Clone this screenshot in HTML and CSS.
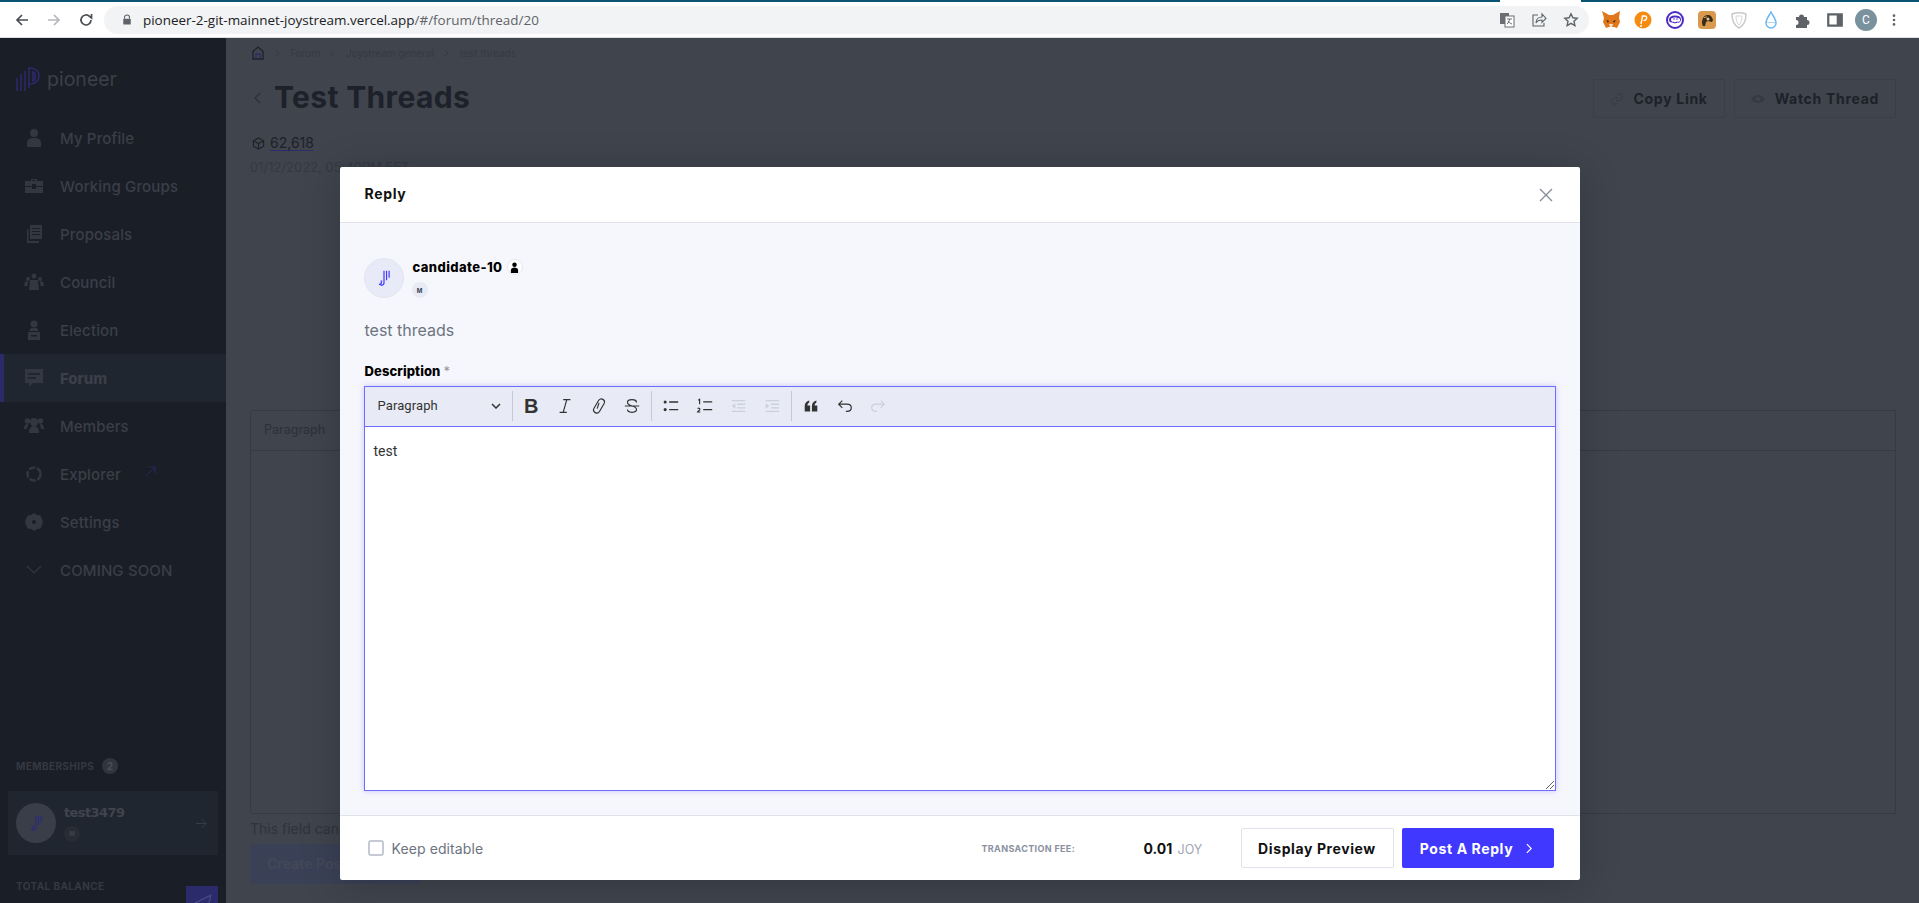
FILE: index.html
```html
<!DOCTYPE html>
<html lang="en">
<head>
<meta charset="utf-8">
<title>Pioneer</title>
<link rel="stylesheet" href="styles.css">
</head>
<body>
<header class="chrome">
  <div class="strip"><span class="strip-a"></span><span class="strip-b"></span></div>
  <div class="bar">
    <svg class="nav-btn" viewBox="0 0 16 16"><path d="M14 8H3M8 3 3 8l5 5" fill="none" stroke="#4a4d52" stroke-width="1.7"/></svg>
    <svg class="nav-btn" viewBox="0 0 16 16"><path d="M2 8h11M8 3l5 5-5 5" fill="none" stroke="#b4b6b9" stroke-width="1.7"/></svg>
    <svg class="nav-btn" viewBox="0 0 16 16"><path d="M13 8a5 5 0 1 1-1.5-3.6L13.5 6V2" fill="none" stroke="#4a4d52" stroke-width="1.7"/></svg>
    <div class="omnibox">
      <svg class="lock" viewBox="0 0 12 14"><path d="M3 6V4.500a3 3 0 0 1 6 0V6" fill="none" stroke="#5f6368" stroke-width="1.300"/><rect x="1.500" y="6" width="9" height="7" rx="1" fill="#5f6368"/></svg>
      <span class="url">pioneer-2-git-mainnet-joystream.vercel.app<span class="url-path">/#/forum/thread/20</span></span>
      <svg class="omni-icon" viewBox="0 0 16 16"><rect x="1" y="1" width="9" height="11" fill="#6b6e72"/><rect x="6" y="4" width="9" height="11" fill="#fff" stroke="#6b6e72"/><path d="M8 7h5M10.500 7c0 2-1 4-2.500 5M9 9c1 1.500 2.500 2.500 4 3" stroke="#6b6e72" fill="none"/></svg>
      <svg class="omni-icon" viewBox="0 0 16 16"><path d="M7 3H2v11h11v-3" fill="none" stroke="#5f6368" stroke-width="1.100"/><path d="M5 11c0-4 3-6 6-6V2l4 4.500-4 4V8c-3 0-5 1-6 3z" fill="none" stroke="#5f6368" stroke-width="1.100"/></svg>
      <svg class="omni-icon" viewBox="0 0 16 16"><path d="m8 1.800 1.900 4 4.300.5-3.200 3 .9 4.300L8 11.400l-3.900 2.200.9-4.300-3.200-3 4.300-.5z" fill="none" stroke="#5f6368" stroke-width="1.400"/></svg>
    </div>
    <div class="extensions">
      <svg class="ext" viewBox="0 0 18 18"><path d="M0 0l7 4h4l7-4-1 7 1 4-3 6-3-1H7l-3 1-3-6 1-4z" fill="#e2761b"/><path d="M4 9l3 1-1 2zM14 9l-3 1 1 2z" fill="#3b2a1a"/><path d="M7 13h4l-1 3H8z" fill="#f5e0c8"/></svg>
      <svg class="ext" viewBox="0 0 18 18"><circle cx="9" cy="9" r="8.500" fill="#f68b10"/><path d="M7 13 8.500 5h2c2 0 2.500 1.500 2 2.800-.4 1.200-1.500 1.700-3 1.700" fill="none" stroke="#fff" stroke-width="1.400"/><circle cx="7" cy="15" r="1" fill="#fff"/></svg>
      <svg class="ext" viewBox="0 0 18 18"><circle cx="9" cy="9" r="8" fill="#fff" stroke="#4c2bc4" stroke-width="2"/><path d="M3 9c0-3 2-4.500 6-4.500s6 1.500 6 4-2 3.500-3.500 3c-1 1-4 1-5 0C5 11.500 3 11 3 9z" fill="#4c2bc4"/><path d="M5 8c1-2 7-2 9 0v2c-1 1-2 1-3 .5-1 1-3 1-4 0-1 .5-2 0-2-2.500z" fill="#fff"/><circle cx="8" cy="8" r=".8" fill="#4c2bc4"/><circle cx="11" cy="8" r=".8" fill="#4c2bc4"/></svg>
      <svg class="ext" viewBox="0 0 18 18"><rect width="18" height="18" rx="4" fill="#d99a4e"/><path d="M5 15c-2-3-1-11 5-11 3 0 4 2 5 5l-1 2-4-1-2 1-1 4z" fill="#3a2a18"/><circle cx="10" cy="8" r="1.500" fill="#e9c48e"/><path d="M6 7c1-1 2-1 3-1" stroke="#e9c48e" fill="none"/></svg>
      <svg class="ext" viewBox="0 0 18 18"><path d="M2 3c4-1.500 10-1.500 14 0 0 6-1 11-7 14C3 14 2 9 2 3z" fill="none" stroke="#c8c9cb" stroke-width="1.500"/><path d="M6 5h6c0 4-1 7-3 9-2-2-3-5-3-9z" fill="none" stroke="#d6d7d9"/></svg>
      <svg class="ext" viewBox="0 0 18 18"><path d="M9 1C7 5 4 8 4 12a5 5 0 0 0 10 0C14 8 11 5 9 1z" fill="none" stroke="#6cb8f2" stroke-width="1.500"/><path d="M5 11.500h8" stroke="#a9d7f7"/></svg>
      <svg class="ext" viewBox="0 0 18 18"><path d="M2 6h3a2.500 2.500 0 1 1 5 0h3v3a2.500 2.500 0 1 1 0 5v3H2v-3a2.500 2.500 0 1 0 0-5z" fill="#5f6368"/></svg>
      <svg class="ext" viewBox="0 0 16 16"><rect x="1" y="2" width="14" height="12" fill="#5f6368"/><rect x="3" y="4" width="6.500" height="8" fill="#fff"/></svg>
      <span class="profile">C</span>
      <svg class="dots" viewBox="0 0 4 16"><circle cx="2" cy="3" r="1.500"/><circle cx="2" cy="8" r="1.500"/><circle cx="2" cy="13" r="1.500"/></svg>
    </div>
  </div>
</header>

<div class="app">
  <aside class="sidebar">
    <div class="logo">
      <svg class="logo-mark" viewBox="0 0 26 26"><g fill="none" stroke="#2b2a6a" stroke-width="1.600"><path d="M2 25V12M6 25V8M10 25V5"/><path d="M14 22V2c6 0 10 3 10 8s-4 8-9 8"/><path d="M18 15V6c3 0 3 9 0 9z"/></g></svg>
      <span class="logo-text">pioneer</span>
    </div>
    <nav class="nav">
      <a class="nav-item"><svg class="nav-icon" viewBox="0 0 20 20"><circle cx="10" cy="5" r="4"/><path d="M3 19v-4c0-4 3-5 7-5s7 1 7 5v4z"/></svg>My Profile</a>
      <a class="nav-item"><svg class="nav-icon" viewBox="0 0 20 20"><path d="M1 5h18v5H12V8H8v2H1zM7 5V3h6v2h-1.500V4h-3v1zM1 11h7v2h4v-2h7v6H1z"/></svg>Working Groups</a>
      <a class="nav-item"><svg class="nav-icon" viewBox="0 0 20 20"><path d="M6 1h12v14H6zm2 3v1h8V4zm0 3v1h8V7zm0 3v1h8v-1z" fill-rule="evenodd"/><path d="M3 5h1.500v12H15v2H3z"/></svg>Proposals</a>
      <a class="nav-item"><svg class="nav-icon" viewBox="0 0 20 20"><circle cx="10" cy="4" r="2.500"/><circle cx="4" cy="7" r="2"/><circle cx="16" cy="7" r="2"/><path d="M6 8h8l1 10H5zM0 14l1-4.500h3L3.500 14zM20 14l-1-4.500h-3l.5 4.500z"/></svg>Council</a>
      <a class="nav-item"><svg class="nav-icon" viewBox="0 0 20 20"><circle cx="10" cy="4" r="3.500"/><path d="M7 8h6l2 3H5zM4 12h12v8H4zm3 3v1.500h6V15z" fill-rule="evenodd"/></svg>Election</a>
      <a class="nav-item nav-active"><svg class="nav-icon" viewBox="0 0 20 20"><path d="M1 1h18v14H9l-4 4v-4H1zm3 4v2h12V5zm0 4v2h8V9z" fill-rule="evenodd"/></svg>Forum</a>
      <a class="nav-item"><svg class="nav-icon" viewBox="0 0 20 20"><circle cx="10" cy="6" r="4"/><circle cx="3.500" cy="5" r="2.800"/><circle cx="16.500" cy="5" r="2.800"/><path d="M5 17c0-5 2-7 5-7s5 2 5 7zM0 13c0-3 1-5 3.500-5l1 1c-1 1-1.500 2.500-1.500 4zM20 13c0-3-1-5-3.500-5l-1 1c1 1 1.500 2.500 1.500 4z"/></svg>Members</a>
      <a class="nav-item"><svg class="nav-icon" viewBox="0 0 20 20"><circle cx="10" cy="10" r="6.500" fill="none" stroke="currentColor" stroke-width="2.500" stroke-dasharray="6.500 1.700"/></svg>Explorer<svg class="external" viewBox="0 0 12 12"><path d="M1 11 11 1M4 1h7v7" fill="none" stroke="#2b2a6a"/></svg></a>
      <a class="nav-item"><svg class="nav-icon" viewBox="0 0 20 20"><path d="M10 1l3 2 3.500.5L18 7l1 3-1 3-1.500 3.500L13 17l-3 2-3-2-3.500-.5L2 13l-1-3 1-3 1.500-3.500L7 3zm0 7a2 2 0 1 0 0 4 2 2 0 0 0 0-4z" fill-rule="evenodd"/></svg>Settings</a>
      <a class="nav-item"><svg class="nav-icon" viewBox="0 0 20 20"><path d="M3 6l7 7 7-7" fill="none" stroke="currentColor" stroke-width="1.200"/></svg>COMING SOON</a>
    </nav>
    <div class="memberships">
      <div class="side-label">MEMBERSHIPS <span class="count">2</span></div>
      <div class="member-card">
        <span class="side-avatar"><svg class="mark" viewBox="0 0 14 20"><path d="M1 17c2 0 3-1 3-3M3 13h2M7 1v14c0 2-2 3-4 3M10 1v11M13 1v8" fill="none" stroke="#2b2a7a" stroke-width="1.400"/></svg></span>
        <div class="side-member">
          <span class="side-name">test3479</span>
          <span class="side-badge">M</span>
        </div>
        <svg class="side-arrow" viewBox="0 0 12 12"><path d="M0 6h11M6 1l5 5-5 5" fill="none" stroke="#3a3f49"/></svg>
      </div>
      <div class="balance">
        <span class="side-label">TOTAL BALANCE</span>
        <span class="transfer"><svg viewBox="0 0 16 16"><path d="M1 8 15 1l-3 13-4-4z" fill="none" stroke="#4a4a8a"/></svg></span>
      </div>
    </div>
  </aside>

  <main class="main">
    <div class="crumbs">
      <svg class="home" viewBox="0 0 12 14"><path d="M1 5.500 6 1l5 4.500V13H1z" fill="none" stroke="#1d2129" stroke-width="1.300"/><path d="M4 13V8h4v5" fill="none" stroke="#2b2a6a" stroke-width="1.300"/></svg>
      <svg class="sep" viewBox="0 0 5 8"><path d="m1 1 3 3-3 3" fill="none" stroke="#363a44"/></svg><span>Forum</span><svg class="sep" viewBox="0 0 5 8"><path d="m1 1 3 3-3 3" fill="none" stroke="#363a44"/></svg><span>Joystream general</span><svg class="sep" viewBox="0 0 5 8"><path d="m1 1 3 3-3 3" fill="none" stroke="#363a44"/></svg><span>test threads</span>
    </div>
    <div class="title-row">
      <svg class="back" viewBox="0 0 8 12"><path d="M6 1 1 6l5 5" fill="none" stroke="#2a2e36" stroke-width="1.100"/></svg>
      <h1 class="title">Test Threads</h1>
      <div class="actions">
        <span class="ghost-btn"><svg class="ghost-icon" viewBox="0 0 14 14"><path d="M6 8a3 3 0 0 0 4 0l2-2a3 3 0 0 0-4-4L7 3M8 6a3 3 0 0 0-4 0L2 8a3 3 0 0 0 4 4l1-1" fill="none" stroke="#353a44"/></svg>Copy Link</span>
        <span class="ghost-btn"><svg class="ghost-icon" viewBox="0 0 14 14"><path d="M0 7c2-3 4.500-4 7-4s5 1 7 4c-2 3-4.500 4-7 4S2 10 0 7z" fill="#353a44"/><circle cx="7" cy="7" r="2" fill="#40444d"/></svg>Watch Thread</span>
      </div>
    </div>
    <div class="block"><svg class="cube" viewBox="0 0 14 14"><path d="M7 1l5.500 3v6L7 13l-5.500-3V4zM1.500 4 7 7l5.500-3M7 7v6" fill="none" stroke="#1d2129" stroke-width="1.200"/></svg><span class="block-num">62,618</span></div>
    <div class="date">01/12/2022, 05:40PM EET</div>
    <div class="bg-editor">
      <div class="bg-toolbar">Paragraph</div>
      <div class="bg-area"></div>
    </div>
    <div class="bg-error">This field cannot be empty</div>
    <div class="bg-create">Create Post</div>
  </main>

  <div class="overlay">
    <section class="modal">
      <div class="modal-head">
        <span class="modal-title">Reply</span>
        <svg class="close" viewBox="0 0 14 14"><path d="M1 1l12 12M13 1 1 13" fill="none" stroke="#81889a" stroke-width="1.200"/></svg>
      </div>
      <div class="modal-body">
        <div class="author">
          <span class="avatar"><svg class="mark" viewBox="0 0 14 20"><path d="M1 17c2 0 3-1 3-3M3 13h2M7 1v14c0 2-2 3-4 3M10 1v11M13 1v8" fill="none" stroke="#4038ff" stroke-width="1.400"/></svg></span>
          <div class="author-info">
            <div class="author-line"><span class="author-name">candidate-10</span><span class="person"><svg viewBox="0 0 10 12"><circle cx="5" cy="3" r="2.500"/><path d="M1 12V9c0-2 2-3 4-3s4 1 4 3v3z"/></svg></span></div>
            <span class="author-badge">M</span>
          </div>
        </div>
        <p class="thread-name">test threads</p>
        <div class="field-label">Description <span class="star">*</span></div>
        <div class="editor">
          <div class="toolbar">
            <span class="format"><span>Paragraph</span><svg class="format-caret" viewBox="0 0 10 6"><path d="M1 1l4 4 4-4" fill="none" stroke="#333" stroke-width="1.500"/></svg></span>
            <span class="tb-sep"></span>
            <span class="tool tool-b">B</span>
            <span class="tool"><svg viewBox="0 0 20 20"><path d="M8 3h8M4 17h8M12 3 8 17" fill="none" stroke="#333" stroke-width="1.300"/></svg></span>
            <span class="tool"><svg viewBox="0 0 20 20"><g fill="none" stroke="#333" stroke-width="1.300"><rect x="6.500" y="1.500" width="7" height="17" rx="3.500" transform="rotate(30 10 10)"/><path d="M10 6.500 8 13"/></g></svg></span>
            <span class="tool"><svg viewBox="0 0 20 20"><path d="M15 6c0-2-2-3-5-3S5 4 5 6s2 3 5 4c3 .8 5 2 5 4s-2 3-5 3-5-1-5-3M2 10h16" fill="none" stroke="#333" stroke-width="1.300"/></svg></span>
            <span class="tb-sep"></span>
            <span class="tool"><svg viewBox="0 0 20 20"><circle cx="3.500" cy="5.500" r="1.700" fill="#333"/><circle cx="3.500" cy="14" r="1.700" fill="#333"/><path d="M8 5.500h10M8 14h10" stroke="#333" stroke-width="1.500"/></svg></span>
            <span class="tool"><svg viewBox="0 0 20 20"><path d="M2.500 3.500 4 2.500V8M1.800 13c.8-1 2.700-.6 2.500.7-.2 1-1.800 1.800-2.500 3h3M8 5.500h10M8 14h10" fill="none" stroke="#333" stroke-width="1.300"/></svg></span>
            <span class="tool tool-off"><svg viewBox="0 0 20 20"><path d="M3 4h15M9 8h9M9 12h9M3 16h15" stroke="#ccd0da" stroke-width="1.500"/><path d="M7 7v6l-4-3z" fill="#ccd0da"/></svg></span>
            <span class="tool tool-off"><svg viewBox="0 0 20 20"><path d="M3 4h15M9 8h9M9 12h9M3 16h15" stroke="#ccd0da" stroke-width="1.500"/><path d="M3 7v6l4-3z" fill="#ccd0da"/></svg></span>
            <span class="tb-sep"></span>
            <span class="tool"><svg viewBox="0 0 20 20"><path d="M3 16V10c0-3 2-5 5-6v2C6.500 7 6 8 6 9.500h3V16zM11 16V10c0-3 2-5 5-6v2c-1.500 1-2 2-2 3.500h3V16z" fill="#333"/></svg></span>
            <span class="tool"><svg viewBox="0 0 20 20"><path d="M7 4 3 8l4 4M3 8h9c3 0 5 1.500 5 4s-2 4-5 4h-1" fill="none" stroke="#333" stroke-width="1.300"/></svg></span>
            <span class="tool tool-off"><svg viewBox="0 0 20 20"><path d="m13 4 4 4-4 4M17 8H8c-3 0-5 1.500-5 4s2 4 5 4h1" fill="none" stroke="#ccd0da" stroke-width="1.300"/></svg></span>
          </div>
          <div class="content">
            <span>test</span>
            <svg class="grip" viewBox="0 0 10 10"><path d="M1 9l8-8M5 9l4-4" stroke="#555" stroke-width=".9" fill="none"/></svg>
          </div>
        </div>
      </div>
      <div class="modal-foot">
        <label class="keep"><span class="checkbox"></span>Keep editable</label>
        <span class="fee-label">TRANSACTION FEE:</span>
        <span class="fee-value">0.01 <span class="joy">JOY</span></span>
        <span class="btn btn-ghost">Display Preview</span>
        <span class="btn btn-primary">Post A Reply<svg class="btn-chev" viewBox="0 0 8 12"><path d="m1 1 5 5-5 5" fill="none" stroke="#fff" stroke-width="1.300"/></svg></span>
      </div>
    </section>
  </div>
</div>
</body>
</html>
```

FILE: styles.css
```css
* { box-sizing: border-box; }
html, body { margin: 0; height: 100%; overflow: hidden; }
body { width: 1919px; height: 903px; font-family: Inter, "Liberation Sans", sans-serif; background: #40444d; display: flex; flex-direction: column; }
svg { display: block; }

.chrome { height: 38px; background: #fff; border-bottom: 1px solid #dcdde0; flex: none; }
.strip { height: 2px; display: flex; justify-content: space-between; }
.strip-a { width: 1500px; background: #0b5373; }
.strip-b { width: 338px; background: #0b5373; }
.bar { height: 35px; display: flex; align-items: center; padding-left: 14px; }
.nav-btn { width: 16px; height: 16px; margin-right: 16px; }
.omnibox { margin-left: -6px; width: 1485px; height: 28px; border-radius: 14px; background: #f1f3f4; display: flex; align-items: center; padding: 0 10px 0 18px; }
.lock { width: 10px; height: 13px; margin-right: 11px; }
.url { flex: 1; font: 13.45px "Open Sans", Roboto, sans-serif; color: #202124; }
.url-path { color: #5f6368; }
.omni-icon { width: 16px; height: 16px; margin-left: 16px; }
.extensions { display: flex; align-items: center; margin-left: 13px; }
.ext { width: 18px; height: 18px; margin-right: 14px; }
.profile { width: 22px; height: 22px; border-radius: 50%; background: #7a929e; color: #fff; font: 12px Roboto, sans-serif; display: flex; align-items: center; justify-content: center; margin-left: -3px; margin-right: 15px; }
.dots { width: 4px; height: 14px; fill: #5f6368; }

.app { flex: 1; position: relative; display: flex; overflow: hidden; }

.sidebar { width: 226px; flex: none; background: #1a1e26; color: #3a3f49; }
.logo { height: 76px; padding: 28px 0 0 15px; display: flex; align-items: flex-start; }
.logo-mark { width: 26px; height: 26px; }
.logo-text { margin-left: 6px; font: 400 19.500px/26px Inter, sans-serif; color: #3b4049; }
.nav-item { height: 48px; display: flex; align-items: center; padding-left: 24px; font-size: 15px; font-weight: 500; letter-spacing: .15px; color: #3a3f49; }
.nav-icon { width: 20px; height: 20px; margin-right: 16px; fill: #323741; color: #323741; }
.nav-active { background: #1f2630; border-left: 4px solid #2b2a6a; padding-left: 20px; font-weight: 800; letter-spacing: -.1px; }
.external { width: 11px; height: 11px; margin: -6px 0 0 24px; }
.memberships { margin-top: 164px; padding: 0 8px; }
.side-label { font-size: 10px; font-weight: 700; letter-spacing: .4px; color: #343943; padding-left: 8px; display: flex; align-items: center; height: 16px; }
.balance .side-label { padding-left: 0; }
.count { width: 16px; height: 16px; border-radius: 50%; background: #31353e; color: #4a4f58; display: flex; align-items: center; justify-content: center; margin-left: 8px; font-size: 10px; }
.member-card { margin-top: 17px; height: 64px; background: #1f2630; display: flex; align-items: center; padding: 0 11px 0 8px; }
.side-avatar { width: 40px; height: 40px; border-radius: 50%; background: #3a3e48; display: flex; align-items: center; justify-content: center; flex: none; }
.mark { width: 14px; height: 17px; }
.side-member { margin-left: 8px; flex: 1; display: flex; flex-direction: column; align-items: flex-start; gap: 5px; }
.side-name { font-size: 13px; font-weight: 800; color: #3f444e; line-height: 16px; font-family: "DejaVu Sans", sans-serif; letter-spacing: -.6px; }
.side-badge { width: 16px; height: 16px; border-radius: 50%; background: #282d35; color: #3f444e; font-size: 6px; font-weight: 700; display: flex; align-items: center; justify-content: center; }
.side-arrow { width: 11px; height: 11px; }
.balance { display: flex; justify-content: space-between; align-items: flex-start; padding-left: 8px; margin-top: 23px; }
.transfer { width: 32px; height: 32px; background: #2b2a6a; margin-top: 8px; display: flex; justify-content: center; align-items: flex-end; padding: 0 5px 4px; }
.transfer svg { width: 20px; height: 20px; }

.main { flex: 1; padding: 8px 23px 0 24px; min-width: 0; }
.crumbs { display: flex; align-items: center; height: 14px; font-size: 10px; color: #353a44; }
.home { width: 12px; height: 14px; margin-left: 2px; }
.sep { width: 5px; height: 8px; margin: 0 10.500px; }
.title-row { display: flex; align-items: center; height: 40px; margin-top: 17px; }
.back { width: 8px; height: 12px; margin: 2px 12px 0 4px; }
.title { margin: 0; flex: 1; font-size: 30px; font-weight: 700; color: #1d2129; letter-spacing: .35px; line-height: 40px; }
.actions { display: flex; gap: 9px; margin-top: 3px; }
.ghost-btn { height: 39px; border: 1px solid #3a3e47; border-radius: 2px; padding: 0 16px; display: flex; align-items: center; gap: 10px; font-size: 14px; font-weight: 700; letter-spacing: .7px; color: #1d2129; }
.ghost-icon { width: 14px; height: 14px; }
.block { display: flex; align-items: center; margin-top: 17px; height: 18px; gap: 5px; padding-left: 2px; font-size: 14px; color: #1d2129; }
.cube { width: 13px; height: 13px; }
.block-num { border-bottom: 1px solid #2b2a6a; line-height: 14px; }
.date { margin-top: 8px; height: 15px; font-size: 13px; line-height: 15px; color: #343943; }
.bg-editor { margin-top: 235px; height: 404px; border: 1px solid #363a43; border-radius: 2px; }
.bg-toolbar { height: 40px; border-bottom: 1px solid #363a43; padding: 0 13px; font-size: 12.500px; line-height: 38px; color: #2c3038; }
.bg-error { margin-top: 6px; font-size: 14px; line-height: 17px; color: #2f333b; }
.bg-create { margin-top: 7px; width: 170px; height: 40px; background: #3a4156; border-radius: 2px; padding-left: 17px; font-size: 14px; font-weight: 700; line-height: 40px; color: #424858; }

.overlay { position: absolute; inset: 0; display: flex; justify-content: center; align-items: flex-start; padding-top: 129px; }
.modal { width: 1240px; height: 713px; background: #fff; border-radius: 2px; box-shadow: 0 4px 40px rgba(0,0,0,.2); display: flex; flex-direction: column; }
.modal-head { height: 56px; border-bottom: 1px solid #e0e3ec; display: flex; align-items: center; justify-content: space-between; padding: 0 27px 0 25px; flex: none; }
.modal-title { font-size: 14px; font-weight: 700; letter-spacing: .65px; color: #111; margin-bottom: 2px; }
.close { width: 14px; height: 14px; }
.modal-body { flex: 1; background: #f6f7fc; padding: 35px 24px 0; border-bottom: 1px solid #e0e3ec; }
.author { display: flex; gap: 8px; height: 40px; }
.avatar { width: 40px; height: 40px; border-radius: 50%; background: #e8ebf7; display: flex; align-items: center; justify-content: center; border: 1px solid #e2e5f2; flex: none; }
.author-info { display: flex; flex-direction: column; justify-content: space-between; align-items: flex-start; }
.author-line { display: flex; align-items: center; gap: 4px; height: 18px; }
.author-name { font-size: 13px; font-weight: 800; color: #000; letter-spacing: .4px; margin-left: 1px; }
.person { width: 16px; height: 16px; border-radius: 50%; background: #fff; border: 1px solid #e5e7ef; display: flex; align-items: center; justify-content: center; }
.person svg { width: 9px; height: 11px; fill: #000; }
.author-badge { width: 16px; height: 16px; border-radius: 50%; background: #e8ebf3; color: #33405a; font-size: 6px; font-weight: 700; display: flex; align-items: center; justify-content: center; }
.thread-name { margin: 22px 0 0 1px; font-size: 16px; line-height: 20px; color: #6c7480; }
.field-label { margin: 21px 0 0 1px; font-size: 13px; font-weight: 800; letter-spacing: .1px; line-height: 20px; color: #000; }
.star { color: #8f96a3; font-weight: 400; }
.editor { margin-top: 5px; height: 405px; display: flex; flex-direction: column; border: 1px solid #6c6cff; box-shadow: 0 0 6px rgba(64,56,255,.25); }
.toolbar { height: 40px; background: #e8ebf5; border-bottom: 1px solid #6c6cff; display: flex; align-items: center; flex: none; padding-bottom: 1px; }
.format { width: 145px; padding: 0 9px 0 13px; display: flex; align-items: center; justify-content: space-between; font: 13px/16px Roboto, sans-serif; color: #333; letter-spacing: .1px; }
.format-caret { width: 10px; height: 6px; }
.tb-sep { width: 1px; height: 30px; background: #c5c9d6; margin: 0 2px; flex: none; }
.tool { width: 33.7px; height: 30px; display: flex; align-items: center; justify-content: center; flex: none; }
.tool svg { width: 18px; height: 18px; }
.tool-b { font: 700 20px/1 "Liberation Sans", sans-serif; color: #333; }
.content { flex: 1; background: #fff; position: relative; padding: 14px 9px; font: 14px/20px Roboto, sans-serif; color: #333; }
.grip { position: absolute; right: 0; bottom: 0; width: 10px; height: 10px; }
.modal-foot { height: 64px; display: flex; align-items: center; padding: 0 26px 0 28px; flex: none; }
.keep { display: flex; align-items: center; gap: 8px; font-size: 14px; color: #6c7480; letter-spacing: .1px; width: 614px; }
.checkbox { width: 16px; height: 16px; border: 2px solid #c5cad6; border-radius: 3px; background: #fff; }
.fee-label { font-size: 9px; font-weight: 700; letter-spacing: .35px; color: #8a91a0; width: 162px; }
.fee-value { font-size: 14px; font-weight: 700; color: #111; width: 97px; }
.joy { color: #a2a8b4; font-weight: 400; font-size: 12.500px; margin-left: 2px; }
.btn { height: 40px; display: flex; align-items: center; justify-content: center; border-radius: 2px; font-size: 14px; font-weight: 700; letter-spacing: .6px; }
.btn-ghost { width: 153px; background: #fff; border: 1px solid #dfe2ea; color: #111; margin-right: 8px; }
.btn-primary { width: 152px; background: #4038ff; color: #fff; gap: 13px; padding-right: 2px; }
.btn-chev { width: 7px; height: 11px; }
```
